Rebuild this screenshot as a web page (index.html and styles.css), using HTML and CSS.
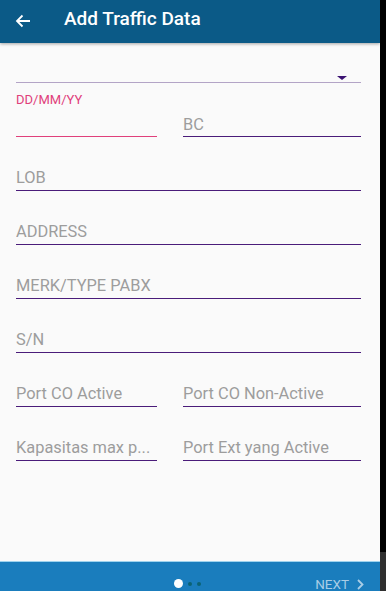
FILE: index.html
```html
<!DOCTYPE html>
<html lang="en">
<head>
<meta charset="utf-8">
<title>Add Traffic Data</title>
<link rel="stylesheet" href="styles.css">
</head>
<body>
<div class="screen">
  <div class="app">
    <header class="topbar">
      <svg class="back" width="16" height="14" viewBox="0 0 16 14" aria-hidden="true">
        <path d="M15 7H2M7.5 1.5L2 7l5.5 5.5" fill="none" stroke="#fff" stroke-width="1.8"/>
      </svg>
      <h1 class="title">Add Traffic Data</h1>
    </header>
    <main class="form">
      <div class="spinner"><span class="caret"></span></div>
      <div class="row row-first">
        <div class="col-left">
          <div class="float-label">DD/MM/YY</div>
          <div class="field field-date"></div>
        </div>
        <div class="col-right">
          <div class="field field-bc">BC</div>
        </div>
      </div>
      <div class="row"><div class="field">LOB</div></div>
      <div class="row"><div class="field">ADDRESS</div></div>
      <div class="row"><div class="field">MERK/TYPE PABX</div></div>
      <div class="row"><div class="field">S/N</div></div>
      <div class="row">
        <div class="col-left"><div class="field">Port CO Active</div></div>
        <div class="col-right"><div class="field">Port CO Non-Active</div></div>
      </div>
      <div class="row">
        <div class="col-left"><div class="field">Kapasitas max p...</div></div>
        <div class="col-right"><div class="field">Port Ext yang Active</div></div>
      </div>
    </main>
    <footer class="bottombar">
      <div class="spacer"></div>
      <div class="dots">
        <span class="dot dot-on"></span>
        <span class="dot"></span>
        <span class="dot"></span>
      </div>
      <div class="next">NEXT
        <svg class="chev" width="7" height="11" viewBox="0 0 7 11" aria-hidden="true">
          <path d="M1 1l4.5 4.5L1 10" fill="none" stroke="currentColor" stroke-width="1.8"/>
        </svg>
      </div>
    </footer>
  </div>
  <div class="edge">
    <div class="edge-top"></div>
    <div class="edge-bottom"></div>
  </div>
</div>
</body>
</html>
```

FILE: styles.css
```css
html, body {
  margin: 0;
  padding: 0;
}
body {
  font-family: Roboto, "Noto Sans", "Liberation Sans", sans-serif;
  background: #000;
}
.screen {
  display: flex;
  width: 386px;
  height: 591px;
  overflow: hidden;
}
.app {
  width: 380px;
  height: 591px;
  display: flex;
  flex-direction: column;
  background: #fafafa;
}
.topbar {
  height: 43px;
  flex: none;
  background: #0b5a87;
  display: flex;
  align-items: center;
  box-shadow: 0 1px 3px rgba(0,0,0,0.35);
  position: relative;
  z-index: 1;
}
.back {
  margin-left: 15px;
  margin-top: -1px;
}
.title {
  margin: 0 0 0 33px;
  font-size: 19px;
  font-weight: 500;
  color: #fff;
  line-height: 24px;
  margin-top: -6px;
}
.form {
  flex: 1;
  padding: 0 19px 0 16px;
}
.spinner {
  height: 39px;
  border-bottom: 1px solid #b3a4c6;
  display: flex;
  justify-content: flex-end;
  align-items: flex-end;
}
.caret {
  width: 0;
  height: 0;
  border-left: 5px solid transparent;
  border-right: 5px solid transparent;
  border-top: 4px solid #3b1272;
  margin: 0 14px 2px 0;
}
.row {
  display: flex;
  gap: 26px;
  align-items: flex-end;
  margin-top: 31px;
}
.row-first {
  margin-top: 9px;
}
.col-left {
  width: 141px;
  flex: none;
}
.col-right {
  flex: 1;
}
.row > .field {
  flex: 1;
}
.float-label {
  font-size: 13px;
  line-height: 16px;
  color: #e0407b;
}
.field {
  font-size: 16.4px;
  line-height: 20px;
  color: #9d9d9d;
  padding-bottom: 2px;
  border-bottom: 1px solid #4a1c7a;
  white-space: nowrap;
  overflow: hidden;
}
.field-date {
  height: 20px;
  padding-top: 7px;
  padding-bottom: 1px;
  border-bottom-color: #e0407b;
}
.field-bc {
  padding-bottom: 1px;
}
.bottombar {
  height: 30px;
  flex: none;
  background: #1a7dbd;
  border-top: 1px solid #9fd3ee;
  box-sizing: border-box;
  display: grid;
  grid-template-columns: 1fr auto 1fr;
  align-items: start;
}
.dots {
  display: flex;
  align-items: center;
  gap: 5px;
  margin-top: 17px;
  margin-left: -6px;
}
.dot {
  width: 4px;
  height: 4px;
  border-radius: 50%;
  background: #0b6374;
}
.dot-on {
  width: 9px;
  height: 9px;
  background: #fff;
}
.next {
  justify-self: end;
  margin-right: 16px;
  margin-top: 14px;
  font-size: 13.5px;
  line-height: 16px;
  color: #a9cde6;
  display: flex;
  align-items: center;
  gap: 8px;
}
.edge {
  width: 6px;
  display: flex;
  flex-direction: column;
}
.edge-top {
  flex: 1;
  background: #000;
}
.edge-bottom {
  height: 39px;
  background: #2f2f2f;
}
```
